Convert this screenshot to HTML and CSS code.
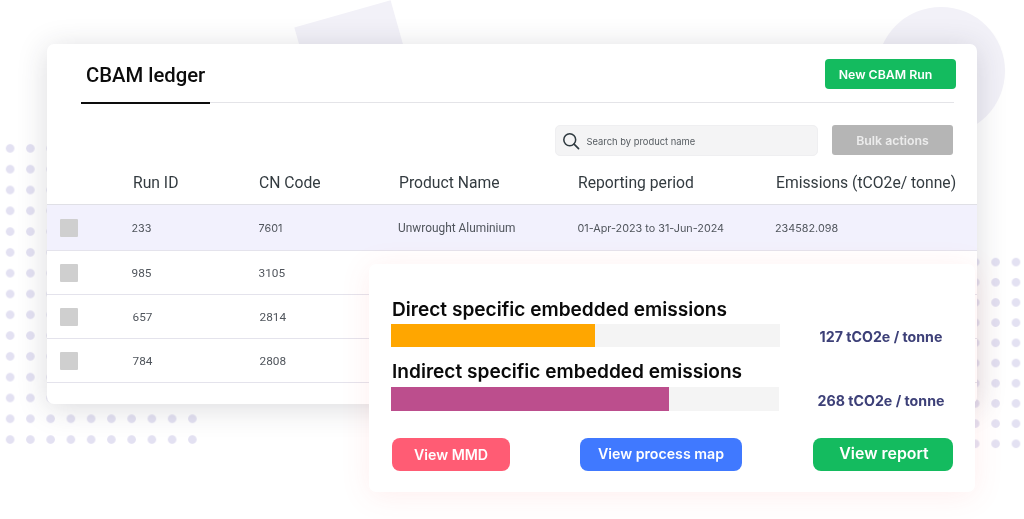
FILE: index.html
```html
<!DOCTYPE html>
<html lang="en">
<head>
<meta charset="utf-8">
<title>CBAM ledger</title>
<link rel="stylesheet" href="styles.css">
</head>
<body>
<div class="stage">
  <div class="deco-square"></div>
  <div class="deco-circle"></div>
  <div class="dots dots-left"></div>
  <div class="dots dots-right"></div>

  <section class="ledger">
    <header class="ledger-head">
      <h1 class="tab">CBAM ledger</h1>
      <button class="btn btn-new">New CBAM Run</button>
    </header>
    <div class="toolbar">
      <div class="search">
        <svg class="search-icon" viewBox="0 0 20 20" width="18" height="18" aria-hidden="true"><circle cx="8.6" cy="8.6" r="6.6" fill="none" stroke="#2f3a40" stroke-width="1.7"/><path d="M13.4 13.4l5 5" fill="none" stroke="#2f3a40" stroke-width="1.8" stroke-linecap="round"/></svg>
        <span>Search by product name</span>
      </div>
      <button class="btn btn-bulk">Bulk actions</button>
    </div>
    <div class="table">
      <div class="row row-head">
        <span></span><span>Run ID</span><span>CN Code</span><span>Product Name</span><span>Reporting period</span><span>Emissions (tCO2e/ tonne)</span>
      </div>
      <div class="row row-first">
        <i class="check"></i><span>233</span><span>7601</span><span class="product">Unwrought Aluminium</span><span>01-Apr-2023 to 31-Jun-2024</span><span>234582.098</span>
      </div>
      <div class="row">
        <i class="check"></i><span>985</span><span>3105</span><span></span><span></span><span></span>
      </div>
      <div class="row row-shift">
        <i class="check"></i><span>657</span><span>2814</span><span></span><span></span><span></span>
      </div>
      <div class="row row-shift">
        <i class="check"></i><span>784</span><span>2808</span><span></span><span></span><span></span>
      </div>
    </div>
  </section>

  <section class="summary">
    <div class="metric">
      <div class="metric-main">
        <h2>Direct specific embedded emissions</h2>
        <div class="bar"><div class="fill fill-direct"></div></div>
      </div>
      <span class="value">127 tCO2e / tonne</span>
    </div>
    <div class="metric metric-second">
      <div class="metric-main">
        <h2>Indirect specific embedded emissions</h2>
        <div class="bar"><div class="fill fill-indirect"></div></div>
      </div>
      <span class="value">268 tCO2e / tonne</span>
    </div>
    <div class="actions">
      <button class="btn btn-mmd">View MMD</button>
      <button class="btn btn-map">View process map</button>
      <button class="btn btn-report">View report</button>
    </div>
  </section>
</div>
</body>
</html>
```

FILE: styles.css
```css
* { box-sizing: border-box; }
html, body { margin: 0; padding: 0; background: #fff; }
body { font-family: "Inter", "Liberation Sans", sans-serif; }
h1, h2 { margin: 0; }

.stage {
  position: relative;
  width: 1024px;
  height: 519px;
  overflow: hidden;
  padding: 44px 0 0 47px;
  background: #fff;
  filter: blur(0.35px);
}

/* background decoration */
.deco-square {
  position: absolute;
  left: 305.5px;
  top: 11.5px;
  width: 100px;
  height: 100px;
  background: #f2f1f8;
  transform: rotate(-15.7deg);
}
.deco-circle {
  position: absolute;
  left: 877px;
  top: 7px;
  width: 128px;
  height: 128px;
  border-radius: 50%;
  background: #f2f1f8;
}
.dots {
  position: absolute;
  background-image: radial-gradient(circle at center, #e3e1f2 0, #e3e1f2 3.8px, rgba(227, 225, 242, 0) 4.7px);
}
.dots-left {
  left: 0;
  top: 138px;
  width: 202px;
  height: 312px;
  background-size: 20.25px 20.8px;
}
.dots-right {
  left: 965px;
  top: 252px;
  width: 61px;
  height: 202px;
  background-size: 20.4px 20.2px;
}

/* ledger card */
.ledger {
  position: relative;
  width: 930px;
  height: 360px;
  background: #fff;
  border-radius: 7px;
  box-shadow: 0 4px 30px rgba(40, 40, 60, 0.17);
}
.ledger-head {
  display: flex;
  justify-content: space-between;
  align-items: flex-start;
  margin: 0 23px 0 34px;
  height: 59px;
  border-bottom: 1px solid #e4e4e8;
}
.tab {
  width: 129px;
  height: 59.5px;
  padding: 19px 0 0 5px;
  border-bottom: 2.5px solid #0d0d0d;
  font: 500 20.3px/24px "Roboto", sans-serif;
  color: #0c0c0c;
  white-space: nowrap;
}
.btn {
  border: 0;
  color: #fff;
  font-family: "Inter", sans-serif;
  font-weight: 600;
  padding: 0;
}
.btn-new {
  width: 131px;
  height: 30px;
  margin: 15px -2px 0 0;
  padding: 0 10px 0 0;
  border-radius: 4px;
  background: #14bb5f;
  font-size: 12.3px;
}

.toolbar {
  display: flex;
  justify-content: flex-end;
  gap: 14px;
  margin: 22px 24px 0 0;
  height: 31px;
}
.search {
  display: flex;
  align-items: center;
  gap: 7px;
  width: 263px;
  padding-left: 5.5px;
  border-radius: 5px;
  border: 1px solid #efeff1;
  background: #f4f4f5;
  font: 400 9.4px "Inter", sans-serif;
  color: #555b60;
}
.search span { margin-top: 1px; }
.btn-bulk {
  width: 121px;
  height: 30px;
  border-radius: 3px;
  background: #b5b5b5;
  color: #ececec;
  font-size: 12.3px;
}

/* table */
.table { margin-top: 9px; }
.row {
  display: grid;
  grid-template-columns: 84.5px 127px 139.5px 179.5px 197.5px 1fr;
  align-items: center;
  height: 44px;
  border-bottom: 1px solid #e4e3ec;
  font: 400 11.8px "Roboto", sans-serif;
  color: #50555c;
}
.row-head {
  grid-template-columns: 86px 126px 140px 179px 198px 1fr;
  height: 40px;
  padding-bottom: 5px;
  font: 400 15.7px "Roboto", sans-serif;
  color: #333b40;
  white-space: nowrap;
  border-bottom-color: #e0e0e6;
}
.row-first {
  height: 46px;
  padding-top: 1px;
  background: #f2f1fd;
  font-family: "Inter", sans-serif;
  font-size: 10.8px;
}
.product { font: 400 11.9px "Roboto", sans-serif; }
.row-shift { padding-left: 1px; }
.check {
  display: block;
  width: 18px;
  height: 18px;
  margin-left: 13px;
  border-radius: 1px;
  background: #cfcfcf;
}
.row-shift .check { margin-left: 12px; }

/* summary card */
.summary {
  position: absolute;
  left: 369px;
  top: 264px;
  width: 606px;
  height: 228px;
  padding: 34px 22px 0 22px;
  background: #fff;
  border-radius: 7px;
  box-shadow: 0 4px 30px rgba(255, 90, 90, 0.1);
}
.metric {
  display: flex;
  align-items: flex-end;
}
.metric-main { width: 389px; margin-right: 29px; }
.metric-second { margin-top: 13px; }
h2 {
  margin-left: 1px;
  font-size: 19.1px;
  line-height: 22px;
  font-weight: 600;
  color: #0a0a0a;
  white-space: nowrap;
}
.bar {
  height: 23px;
  margin-top: 4px;
  background: #f4f4f4;
}
.metric-second .bar { height: 24px; margin-top: 5px; margin-right: 1px; }
.fill { height: 100%; }
.fill-direct { width: 204px; background: #ffa600; }
.fill-indirect { width: 278px; background: #bc4e8d; }
.value {
  width: 144px;
  text-align: center;
  font-size: 14.2px;
  font-weight: 700;
  color: #3d4078;
  line-height: 20px;
  white-space: nowrap;
}
.actions {
  display: flex;
  justify-content: space-between;
  margin: 27px 0 0 1px;
}
.actions .btn {
  height: 33px;
  border-radius: 8px;
  font-size: 14.2px;
}
.btn-mmd { width: 118px; background: #ff5c74; }
.actions .btn-map { width: 162px; margin-left: 70px; padding-bottom: 3px; background: #4079ff; }
.actions .btn-report { width: 140px; margin-left: 71px; padding: 0 0 2px 2px; background: #14bb5f; font-size: 15.9px; }
```
